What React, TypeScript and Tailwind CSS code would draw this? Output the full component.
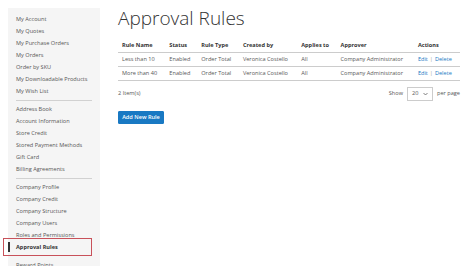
import React from "react";

const groups = [
  [
    "My Account",
    "My Quotes",
    "My Purchase Orders",
    "My Orders",
    "Order by SKU",
    "My Downloadable Products",
    "My Wish List",
  ],
  [
    "Address Book",
    "Account Information",
    "Store Credit",
    "Stored Payment Methods",
    "Gift Card",
    "Billing Agreements",
  ],
  [
    "Company Profile",
    "Company Credit",
    "Company Structure",
    "Company Users",
    "Roles and Permissions",
    "Approval Rules",
    "Reward Points",
  ],
];

const rows = [
  ["Less than 10", "Enabled", "Order Total", "Veronica Costello", "All", "Company Administrator"],
  ["More than 40", "Enabled", "Order Total", "Veronica Costello", "All", "Company Administrator"],
];

export default function App() {
  return (
    <div
      className="h-[266px] w-[474px] overflow-hidden bg-white text-[#333]"
      style={{ fontFamily: '"Open Sans", "Noto Sans", sans-serif' }}
    >
      <div className="flex pl-2 pt-2">
        <aside className="w-[92px] shrink-0 bg-[#f5f5f5] pt-[5px] pb-4">
          {groups.map((group, gi) => (
            <div key={gi}>
              {gi > 0 && <div className="mx-2 mt-[3px] mb-[2px] h-px bg-[#d1d1d1]" />}
              {group.map((item) => {
                const active = item === "Approval Rules";
                return (
                  <div
                    key={item}
                    className={
                      "relative flex h-3 items-center pl-2 text-[5.6px] " +
                      (active ? "mb-[6px] font-bold text-[#333]" : "text-[#575757]")
                    }
                  >
                    {active && (
                      <>
                        <span className="absolute left-0 top-[1px] h-[10px] w-[2px] bg-[#333]" />
                        <span className="absolute -left-[5px] right-[8px] -top-[3px] -bottom-[3px] border border-[#c8515a]" />
                      </>
                    )}
                    {item}
                  </div>
                );
              })}
            </div>
          ))}
        </aside>

        <main className="ml-[18px] w-[342px]">
          <h1 className="text-[19px] font-light leading-none text-[#333] pt-[1px]">
            Approval Rules
          </h1>

          <table className="mt-[10px] w-full border-collapse text-[5.6px]">
            <thead>
              <tr className="border-b border-[#ccc]">
                {["Rule Name", "Status", "Rule Type", "Created by", "Applies to", "Approver", "Actions"].map((h) => (
                  <th key={h} className="h-[14px] px-1 text-left font-bold">
                    {h}
                  </th>
                ))}
              </tr>
            </thead>
            <tbody>
              {rows.map((r, i) => (
                <tr key={i} className="border-b border-[#ccc] text-[#575757]">
                  {r.map((c, j) => (
                    <td key={j} className="h-[14px] px-1">
                      {c}
                    </td>
                  ))}
                  <td className="px-1">
                    <span className="text-[#1979c3]">Edit</span>
                    <span className="mx-[2px] text-[#999]">|</span>
                    <span className="text-[#1979c3]">Delete</span>
                  </td>
                </tr>
              ))}
            </tbody>
          </table>

          <div className="mt-[6px] flex items-center justify-between text-[5.6px] text-[#575757]">
            <span>2 Item(s)</span>
            <div className="flex items-center gap-[4px]">
              <span>Show</span>
              <div className="flex h-[14px] w-[26px] items-center justify-between border border-[#ccc] bg-white px-[4px]">
                <span>20</span>
                <svg width="5" height="4" viewBox="0 0 10 6">
                  <path d="M1 1l4 4 4-4" fill="none" stroke="#555" strokeWidth="1.5" />
                </svg>
              </div>
              <span>per page</span>
            </div>
          </div>

          <button className="mt-[10px] h-[13px] w-[46px] rounded-[1px] border border-[#1979c3] bg-[#1979c3] text-[5.6px] font-semibold text-white">
            Add New Rule
          </button>
        </main>
      </div>
    </div>
  );
}
